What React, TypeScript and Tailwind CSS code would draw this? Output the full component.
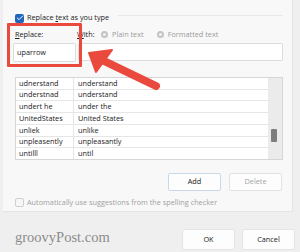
import { Check } from "lucide-react";

const rows = [
  ["udnerstand", "understand"],
  ["understnad", "understand"],
  ["undert he", "under the"],
  ["UnitedStates", "United States"],
  ["unliek", "unlike"],
  ["unpleasently", "unpleasantly"],
  ["untilll", "until"],
];

function Radio({ label }: { label: string }) {
  return (
    <div className="flex items-center gap-[4px]">
      <span className="w-[7px] h-[7px] rounded-full border-[2px] border-[#c4c4c4] bg-[#f2f2f2]" />
      <span className="text-[#9a9a9a]">{label}</span>
    </div>
  );
}

function Button({ label, primary, disabled }: { label: string; primary?: boolean; disabled?: boolean }) {
  return (
    <div
      className={`w-[53px] h-[18px] flex items-center justify-center rounded-[2px] border bg-[#fdfdfd]
        ${primary ? "border-[#c9d9ea]" : "border-[#e2e2e2]"} ${disabled ? "text-[#a5a5a5]" : "text-[#222]"}`}
    >
      {label}
    </div>
  );
}

export default function App() {
  return (
    <div className="relative w-[300px] h-[252px] overflow-hidden bg-[#efefef] text-[7.3px] leading-none text-[#222] font-['Open_Sans',sans-serif]">
      <div className="ml-[3px] w-[290px] h-[212px] bg-[#f8f8f8] border-r border-b border-[#e4e4e4] pl-[12px] pr-[9px] flex flex-col">
        <div className="mt-[13px] h-[10px] flex items-center gap-[3px]">
          <span className="w-[9px] h-[9px] rounded-[2px] bg-[#1e66c0] flex items-center justify-center">
            <Check size={8} strokeWidth={3} color="#fff" />
          </span>
          <span>
            Replace <u>t</u>ext as you type
          </span>
          <span className="flex-1 self-start mt-[2px] ml-[6px] border-t border-[#e8e8e8]" />
        </div>

        <div className="mt-[8px] flex items-center h-[8px]">
          <span className="w-[62px]">
            <u>R</u>eplace:
          </span>
          <span className="w-[24px]">
            <u>W</u>ith:
          </span>
          <Radio label="Plain text" />
          <span className="w-[13px]" />
          <Radio label="Formatted text" />
        </div>

        <div className="mt-[4px] flex gap-[2px] -ml-[2px]">
          <div className="w-[63px] h-[19px] bg-white border border-[#dcdcdc] rounded-[2px] flex items-center pl-[3px]">
            uparrow
          </div>
          <div className="flex-1 h-[18px] bg-white border border-[#dcdcdc] rounded-[2px]" />
        </div>

        <div className="mt-[15px] h-[83px] border border-[#d6d6d6] bg-white flex">
          <div className="flex-1 flex flex-col">
            {rows.map((r, i) => (
              <div key={i} className="flex-1 flex border-b border-[#e6e6e6] last:border-b-0 items-center">
                <span className="w-[58px] h-full flex items-center pl-[3px] border-r border-[#e6e6e6]">{r[0]}</span>
                <span className="pl-[4px]">{r[1]}</span>
              </div>
            ))}
          </div>
          <div className="w-[14px] bg-[#ebebeb] relative">
            <span className="absolute left-[3px] top-[51px] w-[6px] h-[13px] rounded-[1px] bg-[#7d7d7d]" />
          </div>
        </div>

        <div className="mt-[13px] flex justify-end gap-[8px] pr-[1px]">
          <Button label="Add" primary />
          <Button label="Delete" disabled />
        </div>

        <div className="mt-[7px] flex items-center gap-[3px] text-[#a0a0a0]">
          <span className="w-[9px] h-[9px] rounded-[2px] border border-[#cfcfcf] bg-[#f6f6f6]" />
          <span>Automatically use suggestions from the spelling checker</span>
        </div>
      </div>

      <div className="flex items-start pl-[15px] pr-[5px] mt-[17px]">
        <span className="mt-[1px] text-[14.5px] text-[#8c8c8c] font-['Liberation_Serif',serif]">groovyPost.com</span>
        <div className="ml-auto flex gap-[7px]">
          <div className="w-[53px] h-[21px] flex items-center justify-center bg-[#fdfdfd] border border-[#e4e4e4] rounded-[2px]">OK</div>
          <div className="w-[53px] h-[21px] flex items-center justify-center bg-[#fdfdfd] border border-[#e4e4e4] rounded-[2px]">Cancel</div>
        </div>
      </div>

      <div className="absolute left-[7px] top-[23px] w-[75px] h-[44px] border-[3px] border-[#ea4a3d] rounded-[1px]" />
      <svg className="absolute inset-0 pointer-events-none" width="300" height="252">
        <line x1="102" y1="60" x2="156" y2="86" stroke="#ea4a3d" strokeWidth="8" strokeLinecap="round" />
        <polygon points="89,53 112,50 96,72" fill="#ea4a3d" stroke="#ea4a3d" strokeWidth="2" strokeLinejoin="round" />
      </svg>
    </div>
  );
}
